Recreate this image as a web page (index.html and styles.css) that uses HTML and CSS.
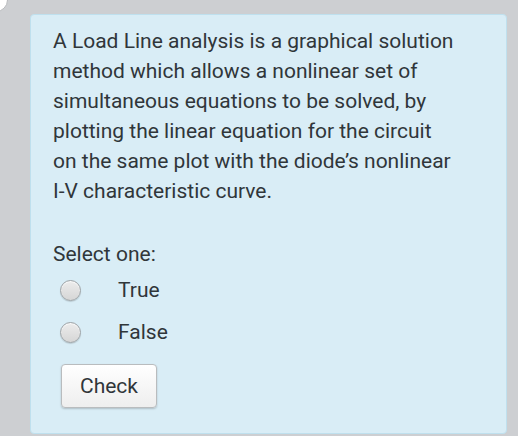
FILE: index.html
```html
<!DOCTYPE html>
<html>
<head>
<meta charset="utf-8">
<link rel="stylesheet" href="styles.css">
</head>
<body>
<div class="corner"></div>
<div class="card">
  <p class="question">A Load Line analysis is a graphical solution method which allows a nonlinear set of simultaneous equations to be solved, by plotting the linear equation for the circuit on the same plot with the diode’s nonlinear I-V characteristic curve.</p>
  <div class="prompt">Select one:</div>
  <div class="options">
    <label class="option"><span class="radio"></span><span class="label">True</span></label>
    <label class="option"><span class="radio"></span><span class="label">False</span></label>
  </div>
  <button class="check">Check</button>
</div>
</body>
</html>
```
FILE: styles.css
```css
html, body {
  margin: 0;
  padding: 0;
}
body {
  background: #cdcfd2;
  width: 518px;
  height: 436px;
  overflow: hidden;
  position: relative;
  font-family: Roboto, "Liberation Sans", sans-serif;
  color: #30363a;
}
.corner {
  position: absolute;
  left: -16px;
  top: -12px;
  width: 22px;
  height: 22px;
  border-radius: 50%;
  background: #ffffff;
  border: 1px solid #b8babd;
}
.card {
  margin: 14px 0 0 30px;
  width: 477px;
  height: 420px;
  box-sizing: border-box;
  background: #d9edf6;
  border: 1px solid #bfe0ee;
  border-radius: 4px;
  padding: 11px 48px 0 22px;
}
.question {
  margin: 0 0 33px 0;
  font-size: 21px;
  line-height: 30px;
}
.prompt {
  font-size: 21px;
  line-height: 30px;
}
.options {
  display: flex;
  flex-direction: column;
  gap: 12px;
  margin-top: 6px;
  padding-left: 7px;
}
.option {
  display: flex;
  align-items: center;
  height: 30px;
  font-size: 21px;
}
.radio {
  width: 19px;
  height: 19px;
  border-radius: 50%;
  border: 1px solid #9ea3a6;
  background: linear-gradient(#ececec, #d6d6d6);
  box-shadow: inset 0 1px 1px rgba(255,255,255,0.8), 0 1px 1px rgba(0,0,0,0.15);
  margin-right: 37px;
}
.check {
  display: block;
  margin: 17px 0 0 8px;
  width: 96px;
  height: 44px;
  font-family: Roboto, "Liberation Sans", sans-serif;
  font-size: 21px;
  color: #30363a;
  background: linear-gradient(#ffffff, #eeeeee);
  border: 1px solid #b9bcbe;
  border-radius: 4px;
  box-shadow: 0 1px 2px rgba(0,0,0,0.2);
  padding: 0;
}
```
